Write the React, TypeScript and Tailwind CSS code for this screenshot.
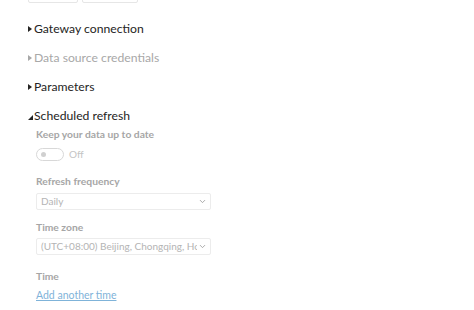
import { ChevronDown } from "lucide-react";

const font = { fontFamily: '"Lato", "Open Sans", sans-serif' };

function Section({ title, open = false, disabled = false }: { title: string; open?: boolean; disabled?: boolean }) {
  return (
    <div className={`flex items-center h-[18px] text-[12.2px] ${disabled ? "text-[#a8a8a8]" : "text-[#252423]"}`}>
      {open ? (
        <span className="mr-[1px] w-0 h-0 border-l-[5px] border-l-transparent border-b-[5px] border-b-[#252423] mt-[3px]" />
      ) : (
        <span
          className={`mr-[2px] w-0 h-0 border-y-[3.5px] border-y-transparent border-l-[4px] ${
            disabled ? "border-l-[#a8a8a8]" : "border-l-[#252423]"
          }`}
        />
      )}
      <span>{title}</span>
    </div>
  );
}

function Select({ value }: { value: string }) {
  return (
    <div className="flex items-center w-[175px] h-[17px] border border-[#ececec] rounded-[2px] pl-[4px] pr-[3px] text-[10px] text-[#b4b4b4]">
      <span className="flex-1 whitespace-nowrap overflow-hidden">{value}</span>
      <ChevronDown className="w-[9px] h-[9px] text-[#9a9a9a] shrink-0 ml-[1px]" strokeWidth={2.2} />
    </div>
  );
}

export default function App() {
  return (
    <div className="w-[474px] h-[310px] bg-white overflow-hidden relative" style={font}>
      <div className="flex gap-[4px] pl-[28px] -mt-[20px]">
        <div className="w-[50px] h-[23px] border border-[#e6e6e6] rounded-[2px]" />
        <div className="w-[56px] h-[23px] border border-[#e6e6e6] rounded-[2px]" />
      </div>
      <div className="pl-[28px] flex flex-col">
        <div className="mt-[17px]">
          <Section title="Gateway connection" />
        </div>
        <div className="mt-[11px]">
          <Section title="Data source credentials" disabled />
        </div>
        <div className="mt-[11px]">
          <Section title="Parameters" />
        </div>
        <div className="mt-[11px]">
          <Section title="Scheduled refresh" open />
        </div>
        <div className="pl-[8px] flex flex-col text-[#a6a6a6]">
          <div className="mt-[2px] text-[10.3px] font-bold h-[14px] leading-[14px]">Keep your data up to date</div>
          <div className="mt-[6px] flex items-center">
            <div className="w-[28px] h-[13px] border border-[#d8d8d8] rounded-full flex items-center pl-[4px]">
              <div className="w-[5px] h-[5px] rounded-full bg-[#d0d0d0]" />
            </div>
            <span className="ml-[5px] text-[10px] text-[#c4c4c4]">Off</span>
          </div>
          <div className="mt-[12px] text-[10.3px] font-bold h-[14px] leading-[14px]">Refresh frequency</div>
          <div className="mt-[5px]">
            <Select value="Daily" />
          </div>
          <div className="mt-[10px] text-[10.3px] font-bold h-[14px] leading-[14px]">Time zone</div>
          <div className="mt-[4px]">
            <Select value="(UTC+08:00) Beijing, Chongqing, Hong Kong, Urumqi" />
          </div>
          <div className="mt-[14px] text-[10.3px] font-bold h-[14px] leading-[14px]">Time</div>
          <div className="mt-[5px] text-[10.5px] text-[#7fb3d9] underline h-[14px] leading-[14px]">Add another time</div>
        </div>
      </div>
    </div>
  );
}
